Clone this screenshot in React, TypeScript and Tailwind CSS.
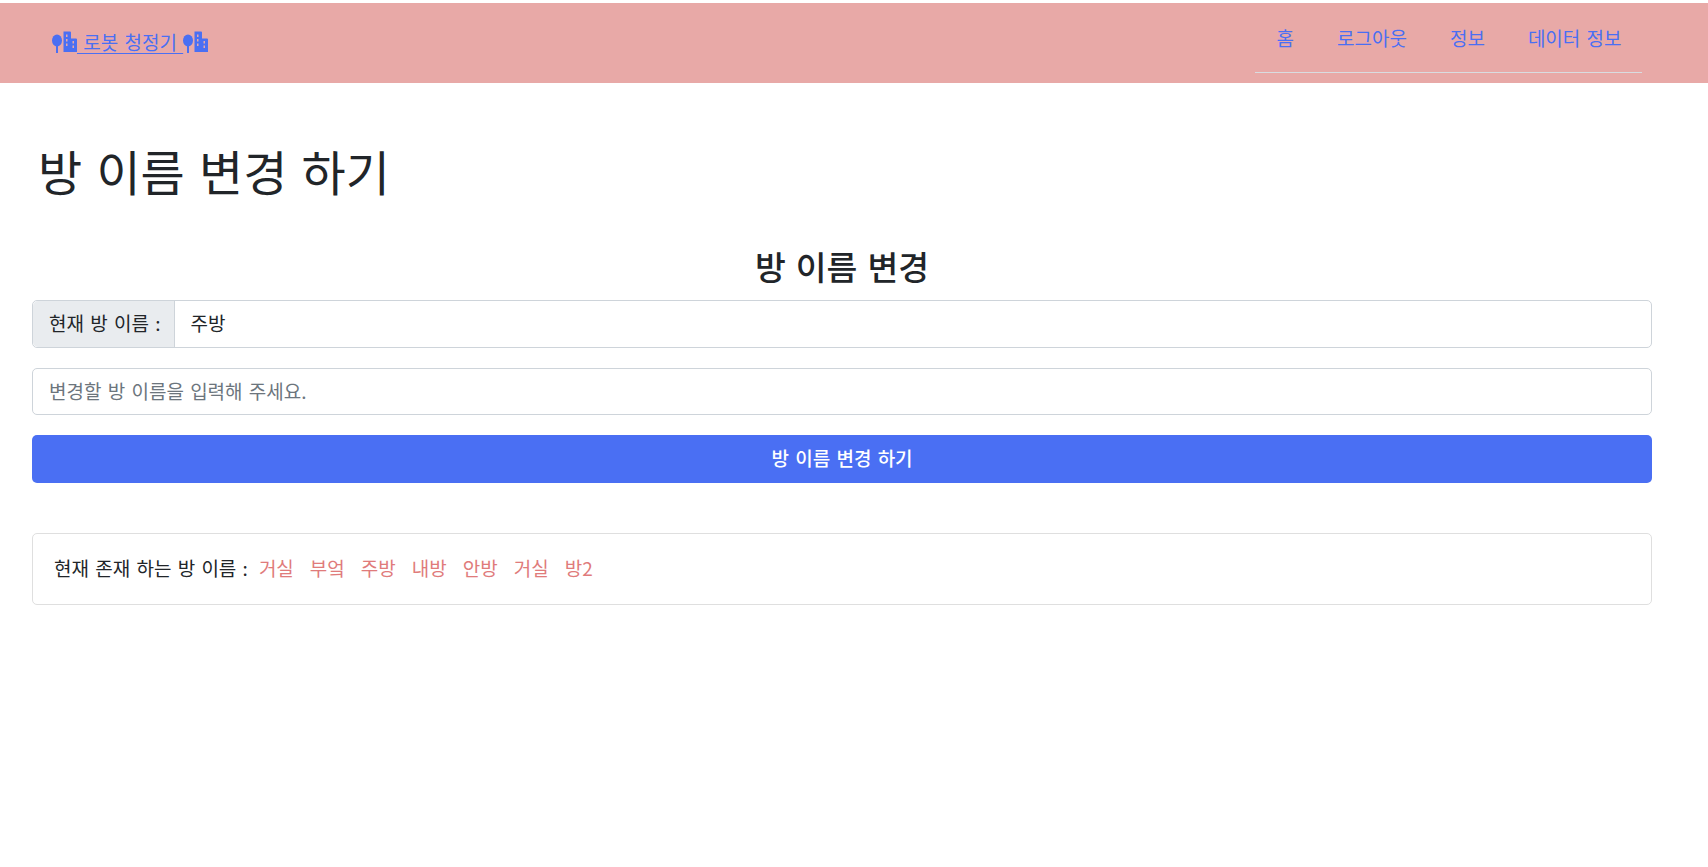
import React from "react";

const rooms = ["거실", "부엌", "주방", "내방", "안방", "거실", "방2"];
const navItems = ["홈", "로그아웃", "정보", "데이터 정보"];

function TreeBuilding() {
  return (
    <svg width="25" height="22" viewBox="0 0 25 22" fill="currentColor" className="inline-block shrink-0">
      <ellipse cx="5" cy="9.500" rx="5" ry="6" />
      <rect x="4" y="9" width="2" height="13" />
      <path fillRule="evenodd" d="M11.500 0.500h6.500a1 1 0 0 1 1 1v6h5a1 1 0 0 1 1 1v12.500h-13.500zM14 3.500v2.500h1.500v-2.500zM14 8v2.500h1.500v-2.500zM14 12.500v2.500h1.500v-2.500zM20.500 10v2.500h1.500v-2.500zM20.500 14.500v2.500h1.500v-2.500z" />
    </svg>
  );
}

export default function App() {
  return (
    <div className="min-h-[867px] bg-white pt-[3px] text-[20px] text-[#212529] [word-spacing:2px] font-['Noto_Sans_CJK_KR','Noto_Sans',sans-serif]">
      <header className="flex h-[80px] items-start justify-between bg-[#e8a9a7] pl-[52px] pr-[66px]">
        <a href="#" className="mt-[24px] flex h-[30px] items-center text-[19px] leading-[30px] text-[#4a6ff3] underline underline-offset-[3px]">
          <TreeBuilding />
          <span className="whitespace-pre"> 로봇 청정기 </span>
          <TreeBuilding />
        </a>
        <nav className="flex h-[70px] w-[387px] items-start border-b border-[#d9dce0] pt-[20px]">
          {navItems.map((item) => (
            <a key={item} href="#" className="shrink-0 whitespace-nowrap px-[21.500px] text-[19px] leading-[30px] text-[#4a6ff3]">
              {item}
            </a>
          ))}
        </nav>
      </header>

      <main className="pl-[32px] pr-[56px]">
        <h1 className="mt-[57px] pl-[6px] text-[48px] leading-[60px] font-normal [word-spacing:3.500px]">방 이름 변경 하기</h1>
        <h2 className="mt-[44px] text-center text-[33.500px] leading-[44px] font-medium [word-spacing:2.500px]">방 이름 변경</h2>

        <form className="mt-[12px] flex flex-col">
          <div className="flex h-[48px] rounded-[5px] border border-[#ced4da]">
            <span className="flex items-center rounded-l-[5px] border-r border-[#ced4da] bg-[#e9ecef] pl-[16px] pr-[14px] pb-[1px] text-[19px] whitespace-nowrap">
              현재 방 이름 :
            </span>
            <input
              readOnly
              value="주방"
              className="min-w-0 flex-1 rounded-r-[5px] px-[15px] pb-[1px] text-[19px] text-[#212529] outline-none"
            />
          </div>
          <input
            placeholder="변경할 방 이름을 입력해 주세요."
            className="mt-[20px] h-[47px] rounded-[5px] border border-[#ced4da] pl-[16px] pr-[15px] pb-[3px] text-[19px] outline-none [word-spacing:2px] placeholder:text-[#6c757d]"
          />
          <button type="button" className="mt-[20px] h-[48px] rounded-[5px] bg-[#4a6ff3] pb-[1px] text-[19px] font-medium text-white [word-spacing:2px]">
            방 이름 변경 하기
          </button>
        </form>

        <div className="mt-[50px] flex h-[72px] items-center gap-[16px] rounded-[5px] border border-[#dfdfdf] px-[21px] pb-[1px] text-[19px]">
          <span className="text-[#212529]">현재 존재 하는 방 이름 :</span>
          <div className="-ml-[5px] flex gap-[16px] text-[#e07b7b]">
            {rooms.map((room, i) => (
              <span key={i}>{room}</span>
            ))}
          </div>
        </div>
      </main>
    </div>
  );
}
